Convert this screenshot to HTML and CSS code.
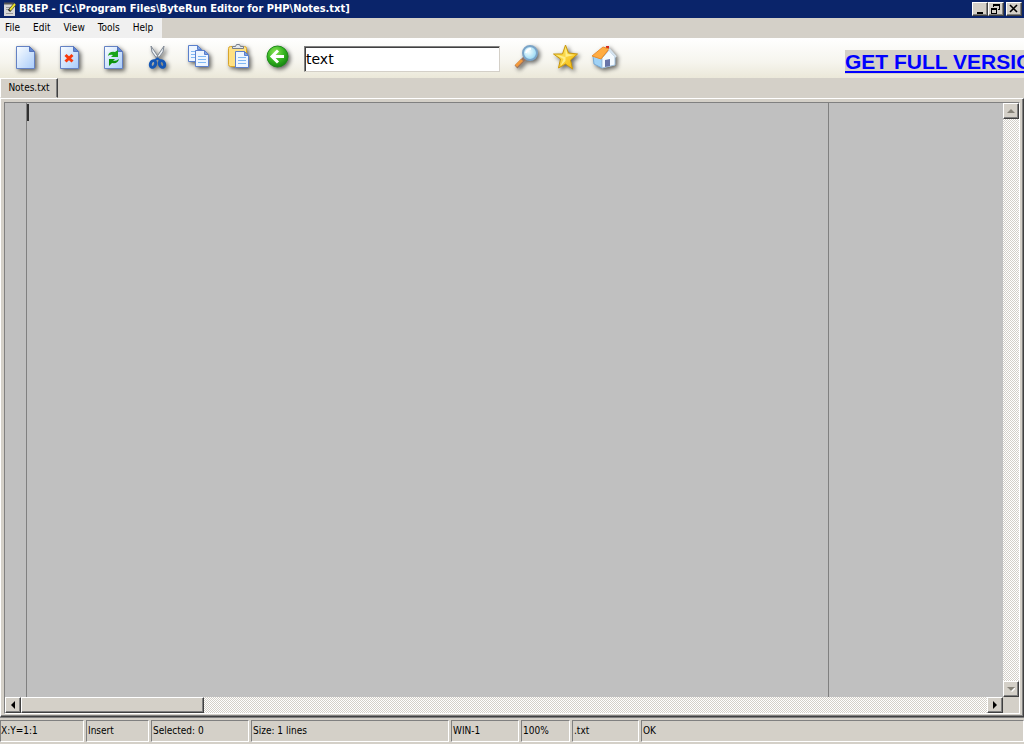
FILE: index.html
```html
<!DOCTYPE html>
<html lang="en">
<head>
    <meta charset="UTF-8">
    <meta name="viewport" content="width=device-width, initial-scale=1.0">
    <title>BREP - [C:\Program Files\ByteRun Editor for PHP\Notes.txt]</title>
    <link rel="stylesheet" href="styles.css">
</head>
<body>
    <svg class="defs" width="0" height="0" aria-hidden="true">
        <defs>
            <linearGradient id="paper" x1="0" y1="0" x2="1" y2="1">
                <stop offset="0" stop-color="#fafdff"/>
                <stop offset="1" stop-color="#a9ccfa"/>
            </linearGradient>
            <radialGradient id="green" cx="0.4" cy="0.3" r="0.75">
                <stop offset="0" stop-color="#8ee558"/>
                <stop offset="0.55" stop-color="#35b520"/>
                <stop offset="1" stop-color="#148010"/>
            </radialGradient>
            <radialGradient id="lens" cx="0.4" cy="0.4" r="0.65">
                <stop offset="0" stop-color="#f4ffff"/>
                <stop offset="1" stop-color="#8fd4f2"/>
            </radialGradient>
            <linearGradient id="gold" x1="0" y1="0" x2="1" y2="1">
                <stop offset="0" stop-color="#fff27a"/>
                <stop offset="1" stop-color="#f5b400"/>
            </linearGradient>
            <g id="page">
                <path d="M.5.5h13l5 5v17H.5z" fill="url(#paper)" stroke="#6482c4"/>
                <path d="M13.5.5v5h5z" fill="#5f86d2" stroke="#5674bc"/>
            </g>
            <g id="sheet">
                <path d="M.5.5h9l4 4v12H.5z" fill="#eef6ff" stroke="#5b80cc"/>
                <path d="M9.5.5v4h4z" fill="#7fa4e4" stroke="#5b80cc"/>
                <path d="M3 6.5h8M3 9.5h8M3 12.5h8" stroke="#80b8f4"/>
            </g>
        </defs>
    </svg>

    <div class="window">
        <header class="titlebar">
            <svg class="app-icon" width="12" height="16" viewBox="0 0 12 16" aria-hidden="true">
                <path d="M0 2h11v13H0z" fill="#d8d8d8"/>
                <path d="M0 2.5h11M1 1v3M3 1v3M5 1v3M7 1v3M9 1v3" stroke="#555"/>
                <path d="M2 6.5h5M2 8.5h3M2 12.5h7" stroke="#999"/>
                <path d="M11 3l-6 7" stroke="#222" stroke-width="3"/>
                <path d="M11 3l-5 6" stroke="#e8e030" stroke-width="2"/>
            </svg>
            <h1 class="title">BREP - [C:\Program Files\ByteRun Editor for PHP\Notes.txt]</h1>
            <div class="window-buttons">
                <button type="button" class="raised" aria-label="Minimize">
                    <svg width="12" height="10"><path d="M3 8h6v2H3z"/></svg>
                </button>
                <button type="button" class="raised" aria-label="Restore">
                    <svg width="12" height="10"><path d="M3 0h7v6H8V5h1V2H4v1H3zM1 4h6v6H1zM2 6v3h4V6z" fill-rule="evenodd"/></svg>
                </button>
                <button type="button" class="raised close" aria-label="Close">
                    <svg width="12" height="10"><path d="M2 1l7 7M9 1L2 8" stroke="#000" stroke-width="1.6"/></svg>
                </button>
            </div>
        </header>

        <nav class="menubar">
            <div class="menus">
                <button type="button">File</button>
                <button type="button">Edit</button>
                <button type="button">View</button>
                <button type="button">Tools</button>
                <button type="button">Help</button>
            </div>
        </nav>

        <div class="toolbar">
            <button type="button" class="tool wide" aria-label="New">
                <svg width="28" height="28"><use href="#page" x="4" y="2"/></svg>
            </button>
            <button type="button" class="tool wide" aria-label="Close file">
                <svg width="28" height="28"><use href="#page" x="4" y="2"/><path d="M9.5 11l7 6.500M16.5 11l-7 6.500" stroke="#f8390c" stroke-width="3"/></svg>
            </button>
            <button type="button" class="tool wide" aria-label="Reload">
                <svg width="28" height="28"><use href="#page" x="4" y="2"/>
                    <path d="M8 12Q9 7 15 8L18 6V13H11L13 11Q10 10 8 12z" fill="#18a418"/>
                    <path d="M19 15Q18 20 12 19L9 22V15H15L13 17Q17 17 19 15z" fill="#0c930c"/>
                </svg>
            </button>
            <button type="button" class="tool wide" aria-label="Cut">
                <svg width="28" height="28">
                    <path d="M7 2l1 6 6 8 1-2zM20 2l-1 6-6 8-1-2z" fill="#edf1f5" stroke="#7e8792"/>
                    <g fill="none" stroke="#1456b4" stroke-width="3">
                        <ellipse cx="9" cy="20" rx="2.500" ry="3.500" transform="rotate(25 9 20)"/>
                        <ellipse cx="18" cy="20" rx="2.500" ry="3.500" transform="rotate(-25 18 20)"/>
                    </g>
                    <path d="M10 17l3.500-2.500L17 17" fill="none" stroke="#1456b4" stroke-width="2"/>
                </svg>
            </button>
            <button type="button" class="tool" aria-label="Copy">
                <svg width="28" height="28"><use href="#sheet" x="2" y="1"/><use href="#sheet" x="9" y="6"/></svg>
            </button>
            <button type="button" class="tool" aria-label="Paste">
                <svg width="28" height="28">
                    <rect x="3.500" y="2.500" width="18" height="20" rx="2" fill="#ffe183" stroke="#d8a52c"/>
                    <path d="M7.500 4.500v-2h3l1-2h3l1 2h3v2z" fill="#e4e8ee" stroke="#777f8c"/>
                    <use href="#sheet" x="10" y="7"/>
                </svg>
            </button>
            <button type="button" class="tool" aria-label="Back">
                <svg width="28" height="28">
                    <circle cx="13.500" cy="12.500" r="10.500" fill="url(#green)" stroke="#1c8a18"/>
                    <path d="M20 12.500H9M14 6.500l-6 6 6 6" fill="none" stroke="#fff" stroke-width="3"/>
                </svg>
            </button>
            <input type="text" class="search" value="text" aria-label="Search text">
            <button type="button" class="tool" aria-label="Find">
                <svg width="28" height="28">
                    <path d="M12 14l-9 9" stroke="#9a7560" stroke-width="4"/>
                    <path d="M9 16l-6 6" stroke="#f39a3c" stroke-width="3"/>
                    <circle cx="17" cy="9" r="7" fill="url(#lens)" stroke="#7aa4c8" stroke-width="2"/>
                    <path d="M13 9q1-4 5-4" fill="none" stroke="#fff" stroke-width="2"/>
                </svg>
            </button>
            <button type="button" class="tool" aria-label="Favorites">
                <svg width="28" height="28">
                    <path d="M13.500 1l3 8 9 1-7 6 2 9-7-5-7 4 2-9-7-5h9z" fill="url(#gold)" stroke="#c9970c"/>
                    <path d="M13.500 3v10l-9-2 7 4-3 7 5-5V13l9-2-7-1z" fill="#fff9a8" opacity="0.700"/>
                </svg>
            </button>
            <button type="button" class="tool" aria-label="Home">
                <svg width="28" height="28">
                    <path d="M15 2h3v8h-3z" fill="#d42a1c"/>
                    <path d="M2 12l9 3v9l-8-4z" fill="#9fd2f6" stroke="#78a9d4"/>
                    <path d="M11 14l7-8 6 7v8l-13 3z" fill="#f4faff" stroke="#a3c2df"/>
                    <path d="M14 16l5-1v7l-5 1z" fill="#6874a8"/>
                    <path d="M1 12L12 3l6 2-8 10z" fill="#ffac42" stroke="#e88e30"/>
                    <path d="M18 5l7 8" stroke="#d5e3ef" stroke-width="2"/>
                </svg>
            </button>
            <div class="promo"><a href="#">GET FULL VERSION</a></div>
        </div>

        <div class="tabs" role="tablist">
            <button type="button" class="tab" role="tab" aria-selected="true">Notes.txt</button>
        </div>

        <main class="tab-page">
            <div class="editor">
                <div class="code">
                    <textarea class="source" aria-label="Source" spellcheck="false"></textarea>
                    <span class="caret"></span>
                </div>
                <div class="scroll vertical">
                    <button type="button" class="raised" aria-label="Scroll up"><svg width="8" height="8"><path d="M0 6h8L4 2z" fill="#858278"/></svg></button>
                    <button type="button" class="raised" aria-label="Scroll down"><svg width="8" height="8"><path d="M1 3h8L5 7z" fill="#fff"/><path d="M0 2h8L4 6z" fill="#858278"/></svg></button>
                </div>
                <div class="scroll horizontal">
                    <button type="button" class="raised" aria-label="Scroll left"><svg width="8" height="8"><path d="M6 0v8L2 4z"/></svg></button>
                    <div class="thumb"></div>
                    <button type="button" class="raised right" aria-label="Scroll right"><svg width="8" height="8"><path d="M2 0v8l4-4z"/></svg></button>
                </div>
            </div>
        </main>

        <footer class="statusbar">
            <span>X:Y=1:1</span>
            <span>Insert</span>
            <span>Selected: 0</span>
            <span>Size: 1 lines</span>
            <span>WIN-1</span>
            <span>100%</span>
            <span>.txt</span>
            <span>OK</span>
        </footer>
    </div>
</body>
</html>
```
FILE: styles.css
```css
* {
    box-sizing: border-box;
}
body {
    margin: 0;
    background: #d4d0c8;
    color: #000;
    font-family: "DejaVu Sans Condensed", "DejaVu Sans", Tahoma, sans-serif;
    font-size: 10px;
    line-height: 14px;
}
button, input, textarea {
    font: inherit;
    color: inherit;
}
button {
    padding: 0;
    border: none;
    background: none;
}
svg {
    display: block;
}
.defs {
    position: absolute;
}
.window {
    display: flex;
    flex-direction: column;
    height: 100vh;
    overflow: hidden;
}

.titlebar {
    display: flex;
    align-items: center;
    gap: 3px;
    height: 18px;
    padding: 0 2px 0 4px;
    background: #0a246a;
    color: #fff;
}
.title {
    flex: 1;
    margin: 0;
    font-size: 11px;
    font-weight: bold;
    white-space: nowrap;
}
.window-buttons {
    display: flex;
}
.raised {
    display: flex;
    align-items: center;
    justify-content: center;
    width: 16px;
    height: 16px;
    background: #d4d0c8;
    border: 1px solid;
    border-color: #fff #404040 #404040 #fff;
    box-shadow: inset -1px -1px #808080;
}
.window-buttons .raised {
    height: 14px;
}
.window-buttons .close {
    margin-left: 2px;
}

.menubar {
    height: 20px;
}
.menus {
    display: flex;
    gap: 13px;
    width: 162px;
    height: 20px;
    padding: 0 5px;
    background: #f0f0f0;
}

.toolbar {
    display: flex;
    align-items: center;
    height: 40px;
    padding-left: 4px;
    background: linear-gradient(#fff, #f6f5ee 60%, #ebe8d9);
}
.tool {
    display: flex;
    justify-content: center;
    flex: none;
    width: 39px;
}
.tool.wide {
    width: 44px;
}
.tool svg {
    filter: drop-shadow(2px 2px 2px rgba(0, 0, 0, 0.6));
}
.search {
    width: 196px;
    height: 26px;
    margin: 1px 7px 0;
    padding: 0 1px;
    background: #fff;
    border: 1px solid;
    border-color: #808080 #d4d0c8 #d4d0c8 #808080;
    box-shadow: inset 1px 1px #404040;
    font-family: "DejaVu Sans", Verdana, sans-serif;
    font-size: 14px;
}
.promo {
    width: 179px;
    margin: 8px 0 0 auto;
    overflow: hidden;
    background: #d4d0c8;
    font-family: "Liberation Sans", Arial, sans-serif;
    font-size: 21px;
    font-weight: bold;
    line-height: 24px;
    white-space: nowrap;
}
.promo a {
    color: #00f;
}

.tabs {
    height: 20px;
}
.tab {
    width: 58px;
    height: 20px;
    border: 1px solid;
    border-color: #fff #404040 transparent #fff;
    box-shadow: inset -1px 0 #808080;
}
.tab-page {
    display: flex;
    flex: 1;
    min-height: 0;
    padding: 3px 3px 2px;
    border: 1px solid;
    border-color: #fff #404040 #404040 #fff;
    box-shadow: inset -1px -1px #808080;
}
.editor {
    display: grid;
    flex: 1;
    grid-template-columns: 1fr 16px;
    grid-template-rows: 1fr 16px;
    border: 1px solid;
    border-color: #808080 #fff #fff #808080;
}
.code {
    position: relative;
    /* gutter edge and right margin line */
    background:
        linear-gradient(#808080, #808080) 21px 0 / 1px 100% no-repeat,
        linear-gradient(#808080, #808080) 823px 0 / 1px 100% no-repeat,
        #c0c0c0;
}
.source {
    display: block;
    width: 100%;
    height: 100%;
    padding: 1px 0 0 24px;
    background: none;
    border: none;
    outline: none;
    resize: none;
    font-family: "Liberation Mono", "Courier New", monospace;
    font-size: 13px;
}
.caret {
    position: absolute;
    top: 1px;
    left: 22px;
    width: 2px;
    height: 17px;
    background: #303030;
}
.scroll {
    display: flex;
    background: repeating-conic-gradient(#fff 0 25%, #d4d0c8 0 50%) 0 0 / 2px 2px;
}
.vertical {
    flex-direction: column;
    justify-content: space-between;
}
.thumb {
    width: 183px;
    background: #d4d0c8;
    border: 1px solid;
    border-color: #fff #404040 #404040 #fff;
    box-shadow: inset -1px -1px #808080;
}
.horizontal .right {
    margin-left: auto;
}

.statusbar {
    display: grid;
    grid-template-columns: 84px 63px 98px 198px 68px 49px 67px 1fr;
    gap: 2px;
    height: 27px;
    padding: 2px 0 3px;
    border-top: 1px solid #808080;
}
.statusbar span {
    padding: 3px 1px;
    border: 1px solid;
    border-color: #808080 #fff #fff #808080;
    white-space: nowrap;
}
.statusbar span:first-child {
    padding-left: 0;
}
```
